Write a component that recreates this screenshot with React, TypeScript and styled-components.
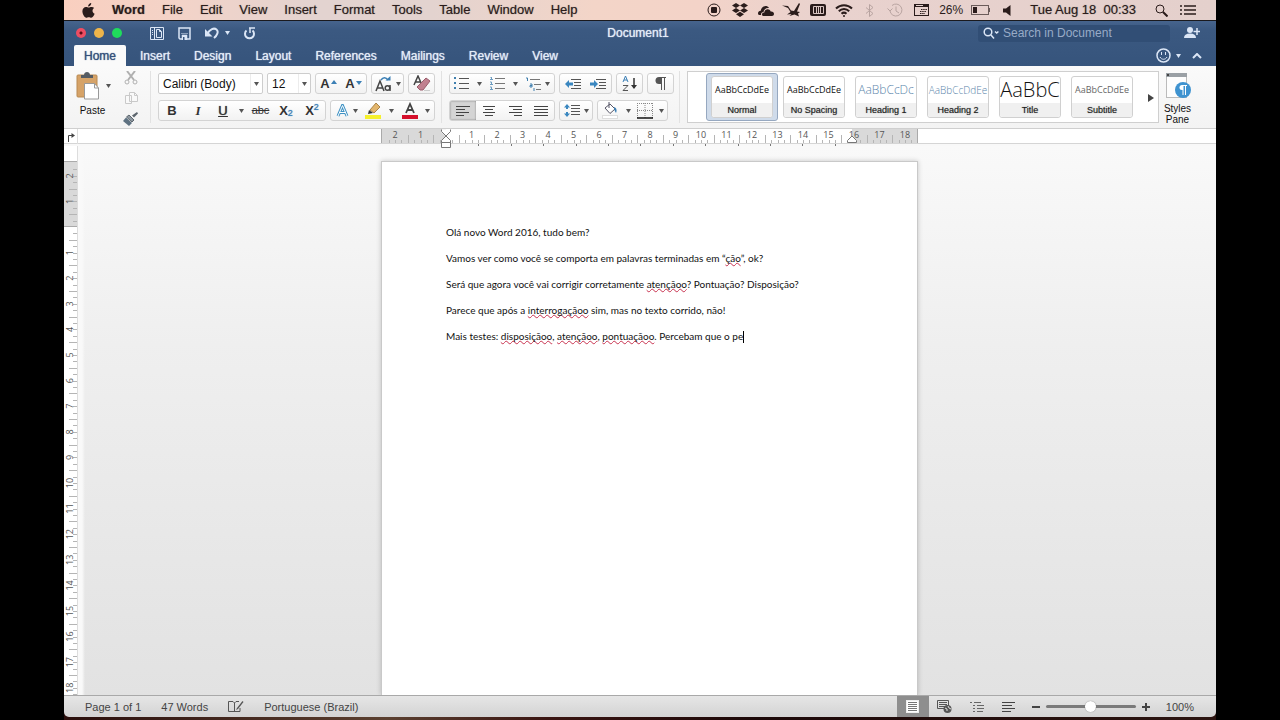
import React from 'react';
import styled, { createGlobalStyle, css } from 'styled-components';

const ui = '"Liberation Sans", Arial, sans-serif';

const GlobalStyle = createGlobalStyle`
  *, *::before, *::after { box-sizing: border-box; }
  body { margin: 0; background: #000; font-family: ${ui}; }
  button, input, select { font: inherit; color: inherit; margin: 0; padding: 0; border: 0; background: none; }
  svg { display: block; flex: none; }
  p { margin: 0; }
`;

const Screen = styled.div`
  height: 100vh;
  min-height: 360px;
  margin: 0 5%;
  display: flex;
  flex-direction: column;
  background: linear-gradient(90deg, #2a0e0c, #5b4030 28%, #3a1512 42%, #1c0808 60%, #2b1410);
  padding-bottom: 3px;
  overflow: hidden;
`;

/* ---------- system menu bar ---------- */

const MenuBar = styled.nav`
  flex: none;
  height: 21px;
  padding: 0 20px 0 18px;
  display: flex;
  align-items: center;
  justify-content: space-between;
  border-bottom: 1px solid #1a1a1e;
  background: linear-gradient(90deg, #f9cfbf, #f3d3c8 10%, #e3d3d0 22%, #e3d3cf 32%, #f3d5c8 46%, #f3d3c8 55%, #e9d2ce 66%, #e4d0cc);
  color: #2a1c1b;
  font-size: 13px;
  line-height: 20px;
`;

const MenuGroup = styled.div<{ $gap: number }>`
  display: flex;
  align-items: center;
  gap: ${(p) => p.$gap}px;
`;

const MenuItem = styled.button<{ $bold?: boolean }>`
  font-weight: ${(p) => (p.$bold ? 700 : 400)};
  white-space: pre;
  text-shadow: 0 0 1px rgba(42, 28, 27, 0.5);
`;

const Clock = styled(MenuItem)`
  padding: 0 8px 0 6px;
`;

const MenuIcon = styled.button<{ $faded?: boolean }>`
  width: 17px;
  display: flex;
  justify-content: center;
  opacity: ${(p) => (p.$faded ? 0.25 : 1)};
`;

const Percent = styled.span`
  font-size: 12px;
`;

/* ---------- window header ---------- */

const Window = styled.main`
  flex: 1;
  min-height: 0;
  display: flex;
  flex-direction: column;
  border-radius: 0 0 5px 5px;
  overflow: hidden;
`;

const Header = styled.header`
  flex: none;
  background: linear-gradient(#46648d, #3b5981 20%, #36547c);
  color: #e4ecf8;
  font-size: 12px;
`;

const TitleRow = styled.div`
  height: 24px;
  padding: 0 16px 0 12px;
  display: grid;
  grid-template-columns: 1fr auto 1fr;
  align-items: center;
`;

const Title = styled.h1`
  margin: 0;
  font-size: 12px;
  font-weight: 400;
  text-shadow: 0 0 1px currentColor;
`;

const TitleSide = styled.div<{ $end?: boolean }>`
  display: flex;
  align-items: center;
  justify-content: ${(p) => (p.$end ? 'flex-end' : 'flex-start')};
  gap: ${(p) => (p.$end ? 14 : 27)}px;
`;

const Lights = styled.div`
  display: flex;
  gap: 8px;
`;

const Light = styled.button<{ $color: string; $dot?: boolean }>`
  width: 10px;
  height: 10px;
  border-radius: 50%;
  background: ${(p) => (p.$dot ? `radial-gradient(circle, #5d0c18 1px, ${p.$color} 2px)` : p.$color)};
`;

const QuickTools = styled.div`
  display: flex;
  align-items: center;
  gap: 13px;
`;

const QuickButton = styled.button`
  display: flex;
  align-items: center;
  gap: 5px;
`;

const SearchBox = styled.label`
  width: 192px;
  height: 17px;
  padding-left: 5px;
  display: flex;
  align-items: center;
  gap: 4px;
  border-radius: 3px;
  background: #314e75;
`;

const SearchInput = styled.input`
  width: 160px;
  outline: none;
  &::placeholder { color: #98abc7; opacity: 1; }
`;

const TabRow = styled.div`
  height: 21px;
  padding: 0 14px 0 10px;
  display: flex;
  align-items: stretch;
  justify-content: space-between;
`;

const Tabs = styled.div`
  display: flex;
  gap: 4px;
`;

const Tab = styled.button<{ $active?: boolean }>`
  padding: 0 10px;
  font-size: 12px;
  border-radius: 2px 2px 0 0;
  text-shadow: 0 0 1px currentColor;
  ${(p) => p.$active && css`background: #fafafa; color: #35517c;`}
`;

const TabExtras = styled.div`
  display: flex;
  align-items: center;
  gap: 11px;
`;

/* ---------- ribbon ---------- */

const Ribbon = styled.section`
  flex: none;
  height: 63px;
  padding: 5px 0 0 10px;
  display: flex;
  align-items: flex-start;
  background: linear-gradient(#fafafa, #f3f3f3);
  border-bottom: 1px solid #cfcfcf;
  color: #222;
  font-size: 12px;
  overflow: hidden;
`;

const Divider = styled.div`
  flex: none;
  width: 1px;
  height: 52px;
  margin: 0 7px 0 6px;
  background: #e2e2e2;
`;

const Clipboard = styled.div`
  flex: none;
  width: 70px;
  padding-right: 6px;
  display: flex;
  justify-content: space-between;
`;

const BigButton = styled.button`
  display: flex;
  flex-direction: column;
  align-items: center;
  font-size: 10px;
  line-height: 11px;
  color: #111;
`;

const PasteFace = styled.span`
  display: flex;
  align-items: center;
  gap: 6px;
  padding-left: 2px;
  margin-bottom: 5px;
`;

const MiniTools = styled.div`
  display: flex;
  flex-direction: column;
  align-items: center;
  gap: 6px;
`;

const MiniButton = styled.button<{ $off?: boolean }>`
  opacity: ${(p) => (p.$off ? 0.4 : 1)};
`;

const ToolArea = styled.div<{ $width: number }>`
  flex: none;
  width: ${(p) => p.$width}px;
  padding-top: 2px;
  display: flex;
  flex-direction: column;
  gap: 6px;
`;

const ToolRow = styled.div`
  display: flex;
  gap: 4px;
`;

const Combo = styled.div<{ $width: number }>`
  flex: none;
  position: relative;
  width: ${(p) => p.$width}px;
  height: 21px;
  border: 1px solid #cdcdcd;
  border-radius: 2px;
  background: #fff;
`;

const ComboSelect = styled.select`
  appearance: none;
  width: 100%;
  height: 19px;
  padding-left: 4px;
  font-size: 12px;
  color: #111;
`;

const ComboArrow = styled.span`
  position: absolute;
  top: 0;
  right: 0;
  width: 12px;
  height: 19px;
  display: grid;
  place-items: center;
  border-left: 1px solid #ececec;
  pointer-events: none;
`;

const Group = styled.div`
  flex: none;
  display: flex;
  height: 21px;
  border: 1px solid #d3d3d3;
  border-radius: 3px;
  background: linear-gradient(#fff, #f2f2f2);
  overflow: hidden;
`;

const Tool = styled.button<{ $w: number; $on?: boolean; $joined?: boolean; $gap?: number }>`
  width: ${(p) => p.$w}px;
  display: flex;
  align-items: center;
  justify-content: center;
  gap: ${(p) => p.$gap ?? 4}px;
  color: #333;
  ${(p) => p.$on && css`background: #d4d4d4; box-shadow: inset 0 0 2px #777;`}
  & + & { border-left: ${(p) => (p.$joined ? 'none' : '1px solid #e6e6e6')}; }
`;

const Letter = styled.span<{ $look?: 'bold' | 'italic' | 'under' | 'strike' }>`
  font-size: ${(p) => (p.$look === 'strike' ? 11 : 13)}px;
  line-height: 15px;
  ${(p) => p.$look !== 'strike' && p.$look !== 'under' && css`font-weight: 700;`}
  ${(p) => p.$look === 'italic' && css`font-family: "Liberation Serif", serif; font-style: italic;`}
  ${(p) => p.$look === 'under' && css`text-decoration: underline; text-shadow: 0 0 1px currentColor;`}
  ${(p) => p.$look === 'strike' && css`text-decoration: line-through;`}
`;

const Script = styled.span<{ $up?: boolean }>`
  color: #3b7fb5;
  font-size: 9px;
  line-height: 9px;
  text-shadow: 0 0 1px currentColor;
  align-self: ${(p) => (p.$up ? 'flex-start' : 'flex-end')};
  margin: 2px 0;
`;

const Gallery = styled.div`
  flex: none;
  width: 472px;
  height: 52px;
  padding: 1px 4px 0 18px;
  display: flex;
  align-items: flex-start;
  justify-content: space-between;
  border: 1px solid #cfcfcf;
  background: #fff;
`;

const StyleList = styled.div`
  display: flex;
`;

const StyleFrame = styled.button<{ $on?: boolean }>`
  width: 72px;
  height: 48px;
  padding: 2px 4px;
  border: 1px solid ${(p) => (p.$on ? '#96a8c0' : 'transparent')};
  border-radius: 3px;
  background: ${(p) => (p.$on ? '#cfdbea' : 'none')};
`;

const StyleCard = styled.span`
  display: flex;
  flex-direction: column;
  height: 42px;
  border: 1px solid #d0d0d0;
  border-radius: 3px;
  background: #fff;
`;

const Sample = styled.span<{ $size: number; $color: string; $light?: boolean }>`
  flex: 1;
  display: flex;
  align-items: center;
  justify-content: center;
  font-family: "Open Sans", "Noto Sans", sans-serif;
  font-size: ${(p) => p.$size}px;
  font-weight: ${(p) => (p.$light ? 300 : 400)};
  line-height: 26px;
  color: ${(p) => p.$color};
  white-space: nowrap;
`;

const StyleName = styled.span`
  height: 14px;
  line-height: 14px;
  font-size: 9px;
  text-align: center;
  color: #222;
  background: #f0f0f0;
  border-radius: 0 0 3px 3px;
  white-space: nowrap;
  text-shadow: 0 0 1px rgba(0, 0, 0, 0.5);
`;

const GalleryNext = styled.button`
  align-self: center;
`;

const StylesPane = styled(BigButton)`
  flex: none;
  width: 37px;
  gap: 4px;
`;

/* ---------- rulers and document ---------- */

const TopRuler = styled.div`
  flex: none;
  position: relative;
  z-index: 1;
  height: 17px;
  display: flex;
  background: linear-gradient(#fff 14px, #d5d5d5 14px, #d5d5d5 15px, #f8f8f8 15px);
`;

const TabStop = styled.button`
  width: 14px;
  height: 15px;
  display: grid;
  place-items: center;
  border-right: 1px solid #ddd;
`;

const RulerTrack = styled.div`
  flex: 1;
  padding-left: 5px;
  display: flex;
  justify-content: center;
`;

const Workspace = styled.div`
  flex: 1;
  min-height: 0;
  display: flex;
  overflow: hidden;
`;

const SideRuler = styled.aside`
  flex: none;
  width: 14px;
  overflow: hidden;
  background: #fff;
  border-right: 1px solid #ddd;
`;

const Desk = styled.div`
  flex: 1;
  padding: 15px 0 0 5px;
  display: flex;
  justify-content: center;
  background: linear-gradient(90deg, #f9f9f9 4px, transparent 7px), linear-gradient(#f9f9f9, #efefef 36%, #e2e2e2);
`;

const Sheet = styled.article`
  width: 537px;
  padding: 57px 64px;
  background: #fff;
  border: 1px solid #c9c9c9;
  border-bottom: 0;
  box-shadow: 0 0 5px rgba(0, 0, 0, 0.2);
  color: #111;
  font-family: Lato, sans-serif;
  font-size: 10px;
  line-height: 26px;
  white-space: nowrap;
`;

const Typo = styled.span`
  text-decoration: underline wavy #c8324f 1px;
  text-underline-offset: 0;
  text-decoration-skip-ink: none;
`;

const Caret = styled.span`
  display: inline-block;
  width: 1px;
  height: 12px;
  vertical-align: middle;
  background: #000;
`;

/* ---------- status bar ---------- */

const StatusBar = styled.footer`
  flex: none;
  height: 22px;
  padding: 0 22px 0 21px;
  display: flex;
  align-items: stretch;
  justify-content: space-between;
  border-top: 1px solid #a9a9a9;
  background: linear-gradient(#e6e6e6, #d3d3d3);
  color: #444;
  font-size: 11px;
  line-height: 20px;
`;

const StatusGroup = styled.div<{ $gap: number }>`
  display: flex;
  align-items: center;
  gap: ${(p) => p.$gap}px;
`;

const ZoomGroup = styled(StatusGroup)`
  padding-left: 7px;
`;

const ZoomValue = styled.output`
  padding-left: 10px;
`;

const ViewButton = styled.button<{ $on?: boolean }>`
  width: 32px;
  height: 21px;
  display: grid;
  place-items: center;
  background: ${(p) => (p.$on ? '#8e8e8e' : 'none')};
`;

const ZoomSlider = styled.input`
  appearance: none;
  width: 90px;
  height: 3px;
  border-radius: 2px;
  background: #7a7a7a;
  &::-webkit-slider-thumb {
    appearance: none;
    width: 11px;
    height: 11px;
    border-radius: 50%;
    background: #fff;
    box-shadow: 0 0 1px #666;
  }
`;

/* ---------- drawings ---------- */

type IconProps = { w: number; h: number; children: React.ReactNode; stroke?: string; sw?: number };

const Icon = ({ w, h, children, stroke = 'none', sw = 1 }: IconProps) => (
  <svg width={w} height={h} viewBox={`0 0 ${w} ${h}`} fill="none" stroke={stroke} strokeWidth={sw} aria-hidden="true">
    {children}
  </svg>
);

const Down = ({ color = '#555' }: { color?: string }) => (
  <Icon w={5} h={4}><path d="M0 0h5L2.500 4z" fill={color} /></Icon>
);

const AlignIcon = ({ rows, anchor }: { rows: number[]; anchor: 'l' | 'c' | 'r' }) => (
  <Icon w={14} h={12}>
    {rows.map((len, i) => (
      <rect key={i} x={anchor === 'l' ? 0 : anchor === 'r' ? 14 - len : (14 - len) / 2} y={i * 3 + 1} width={len} height={1} fill="#444" />
    ))}
  </Icon>
);

const BulletIcon = () => (
  <Icon w={15} h={13}>
    {[1, 6, 11].map((y) => <g key={y}><rect x={0} y={y - 1} width={2} height={2} fill="#3f7fae" /><rect x={5} y={y} width={10} height={1} fill="#555" /></g>)}
  </Icon>
);

const NumberIcon = () => (
  <Icon w={15} h={13}>
    {[1, 6, 11].map((y) => <g key={y}><path d={`M0 ${y - 1}h1.500v2.500M0 ${y + 1.5}h3`} stroke="#6c9cc0" /><rect x={5} y={y} width={10} height={1} fill="#777" /></g>)}
  </Icon>
);

const MultiIcon = () => (
  <Icon w={15} h={14}>
    <path d="M0 1h1.500v3M4 7h2v3h-2v-1.500h2M8 11v3" stroke="#3f7fae" />
    <path d="M4 2.500h10M8 7.500h7M10 12.500h5" stroke="#777" />
  </Icon>
);

const IndentIcon = ({ right }: { right?: boolean }) => (
  <Icon w={16} h={12}>
    <path d="M6 1.500h10M9 4.500h7M9 7.500h7M6 10.500h10" stroke="#555" />
    <path d={right ? 'M8 6L4 2v2.500H0v3h4V10z' : 'M0 6l4-4v2.500h4v3H4V10z'} fill="#3a87c0" />
  </Icon>
);

const SpacingIcon = () => (
  <Icon w={16} h={13}>
    <path d="M7 1.500h9M7 4.500h9M7 7.500h9M7 10.500h9" stroke="#555" />
    <path d="M3 0l3 3.500H4V5H2V3.500H0zM3 13l3-3.500H4V8H2v1.500H0z" fill="#3a87c0" />
  </Icon>
);

const tickLevels = (from: number, to: number) => {
  const out: { at: number; half: boolean }[] = [];
  for (let q = from; q <= to; q += 1) {
    if (q !== 0) out.push({ at: q, half: Math.abs(q % 4) === 2 });
  }
  return out;
};

const CM = 25.5;

const HorizontalRuler = () => (
  <svg width="537" height="20" viewBox="0 0 537 20" aria-label="Horizontal ruler" overflow="visible">
    <rect x="0" y="0" width="65" height="14" fill="#d9d9d9" />
    <rect x="471" y="0" width="66" height="14" fill="#d9d9d9" />
    <path d="M.5 0v14M536.500 0v14" stroke="#aaa" />
    {tickLevels(-9, 73).map(({ at, half }) => (
      <rect key={at} x={Math.round(65 + (at * CM) / 4)} y={half ? 6 : 11} width={1} height={half ? 8 : 3} fill="#b5b5b5" />
    ))}
    {Array.from({ length: 12 }, (_, i) => (
      <rect key={i} x={Math.round(65 + (i + 1) * 32.4)} y={15} width={1} height={2} fill="#777" />
    ))}
    <g fontFamily="Open Sans, Noto Sans, sans-serif" fontSize="9" fill="#555" textAnchor="middle">
      {Array.from({ length: 21 }, (_, i) => i - 2).filter((n) => n !== 0).map((n) => (
        <text key={n} x={65 + n * CM} y="9">{Math.abs(n)}</text>
      ))}
    </g>
    <g fill="#fff" stroke="#777">
      <path d="M60.500 0.500h9v3l-4.500 4l-4.500-4z" stroke="none" />
      <path d="M60.500 0.500v2l4.500 4.500l4.500-4.500v-2M60.500 13.500v-2l4.500-4.500l4.500 4.500v2zM60.500 13.500h9v5h-9z" />
      <path d="M466.500 13.500v-2l4.500-4.500l4.500 4.500v2z" />
    </g>
  </svg>
);

const VerticalRuler = () => (
  <svg width="13" height="1400" viewBox="0 0 13 1400" aria-label="Vertical ruler">
    <rect x="0" y="15" width="13" height="66" fill="#d9d9d9" />
    <path d="M0 15.500h13M0 80.500h13" stroke="#aaa" />
    {tickLevels(-9, 200).map(({ at, half }) => (
      <rect key={at} x={half ? 5 : 9} y={Math.round(81 + (at * 25.6) / 4)} width={half ? 8 : 4} height={1} fill="#b5b5b5" />
    ))}
    <g fontFamily="Open Sans, Noto Sans, sans-serif" fontSize="9" fill="#555" textAnchor="middle">
      {Array.from({ length: 21 }, (_, i) => i - 2).filter((n) => n !== 0).map((n) => (
        <text key={n} transform={`translate(9 ${81 + n * 25.6}) rotate(-90)`}>{Math.abs(n)}</text>
      ))}
    </g>
  </svg>
);

const DARK = '#2a1c1b';
const PALE = '#dbe6f6';

const AppleLogo = () => (
  <svg width="13" height="15" viewBox="0 0 24 28" fill={DARK} aria-hidden="true">
    <path d="M17 0c.2 2-.6 3.600-1.600 4.800C14.300 6 12.800 6.800 11.300 6.700c-.2-1.800.6-3.500 1.600-4.600C14 .9 15.700.1 17 0zM22.500 9.300c-1.900 1.200-3 2.900-3 5.200 0 2.600 1.500 4.600 3.900 5.600-.9 2.900-3.500 7.400-6.200 7.400-1.700 0-2.500-1-4.700-1s-3 1-4.700 1C4.700 27.500.6 20.900.6 15.500c0-5 3.100-8.200 6.700-8.200 2 0 3.700 1.300 5.100 1.300 1.200 0 3.200-1.400 5.500-1.300 1.900.1 3.600.8 4.600 2z" />
  </svg>
);

const menuNames = ['File', 'Edit', 'View', 'Insert', 'Format', 'Tools', 'Table', 'Window', 'Help'];
const tabNames = ['Home', 'Insert', 'Design', 'Layout', 'References', 'Mailings', 'Review', 'View'];

const styleItems = [
  { name: 'Normal', text: 'AaBbCcDdEe', size: 9, color: '#111' },
  { name: 'No Spacing', text: 'AaBbCcDdEe', size: 9, color: '#111' },
  { name: 'Heading 1', text: 'AaBbCcDc', size: 12, color: '#5c86ab', light: true },
  { name: 'Heading 2', text: 'AaBbCcDdEe', size: 10, color: '#5c86ab', light: true },
  { name: 'Title', text: 'AaBbC', size: 20, color: '#111', light: true },
  { name: 'Subtitle', text: 'AaBbCcDdEe', size: 9, color: '#666' },
];

export default function App() {
  return (
    <>
      <GlobalStyle />
      <Screen>
        <MenuBar aria-label="System menu">
          <MenuGroup $gap={17}>
            <MenuItem aria-label="Apple"><AppleLogo /></MenuItem>
            <MenuItem $bold>Word</MenuItem>
            {menuNames.map((name) => <MenuItem key={name}>{name}</MenuItem>)}
          </MenuGroup>
          <MenuGroup $gap={9}>
            <MenuIcon aria-label="Recording">
              <Icon w={14} h={14}><circle cx="7" cy="7" r="6" stroke={DARK} /><rect x="4" y="4" width="6" height="6" rx="1" fill={DARK} /></Icon>
            </MenuIcon>
            <MenuIcon aria-label="Dropbox">
              <Icon w={16} h={14}><path d="M4 0l4 2.500L4 5 0 2.500zM12 0l4 2.500L12 5 8 2.500zM4 5l4 2.500L4 10 0 7.500zM12 5l4 2.500-4 2.500-4-2.500zM8 8.800l4 2.500L8 14l-4-2.700z" fill={DARK} /></Icon>
            </MenuIcon>
            <MenuIcon aria-label="Cloud drive">
              <Icon w={16} h={11}><path d="M0 8.500C0 6.500 1.500 5.500 2.800 5.700 3.200 1.500 8.500-1 11 3 8 2.500 5.800 4.500 5.500 7c-2 0-2.800 1.500-2.300 3H1.500C.5 10 0 9.300 0 8.500z" fill={DARK} /><path d="M4 9.500C4 8 5 7.300 6.300 7.500 6.600 4 11.500 3 12.700 6.500c2-.3 3.300.8 3.300 2.300S15 11 14 11H5.500C4.500 11 4 10.300 4 9.500z" fill={DARK} /></Icon>
            </MenuIcon>
            <MenuIcon aria-label="Bird">
              <Icon w={19} h={14}><path d="M0 2.500l6 .5 3 4.500 3 .5L17 0l1 1-3 7.500 3 .5-2 1.500 1 3-4.500-2-5 1.500 2-2-4.500.5 3.500-2.500L6 5z" fill={DARK} /></Icon>
            </MenuIcon>
            <MenuIcon aria-label="Memory">
              <Icon w={16} h={12}><rect x="0" y="0" width="16" height="12" rx="2" fill={DARK} /><path d="M3.500 2.500h10v7h-10zM6.500 3v6M8.500 3v6M10.500 3v6" stroke="#d9c5c2" /></Icon>
            </MenuIcon>
            <MenuIcon aria-label="Wi-Fi">
              <Icon w={18} h={13} stroke={DARK} sw={2}><path d="M1 4.500C5.500 0 12.500 0 17 4.500M3.800 7.300c3-3 7.400-3 10.400 0M6.500 9.800c1.500-1.400 3.500-1.400 5 0" /><circle cx="9" cy="12" r="1" fill={DARK} stroke="none" /></Icon>
            </MenuIcon>
            <MenuIcon $faded aria-label="Bluetooth">
              <Icon w={9} h={13} stroke={DARK} sw={1}><path d="M1 3.500l7 6L4.500 12.500V.5L8 3.500l-7 6" /></Icon>
            </MenuIcon>
            <MenuIcon $faded aria-label="Time Machine">
              <Icon w={17} h={14} stroke={DARK} sw={1}><path d="M3 8A6 6 0 1 0 5 2.500M3 8L.5 5.500M3 8l2.500-2.500M9 3.500V8l3 2" /></Icon>
            </MenuIcon>
            <MenuIcon aria-label="Calendar">
              <Icon w={15} h={12}><rect x=".5" y=".5" width="14" height="11" stroke={DARK} /><path d="M0 0h15v3H0z" fill={DARK} /><path d="M2 1.500h7" stroke="#e6d3cf" /><path d="M7 5.500h6M6 7.500h6M6 9.500h5" stroke={DARK} strokeDasharray="1.500 .7" /></Icon>
            </MenuIcon>
            <Percent>26%</Percent>
            <MenuIcon aria-label="Battery">
              <Icon w={20} h={10}><rect x=".5" y=".5" width="17" height="9" stroke="#6b5c5a" /><rect x="2" y="2" width="4" height="6" fill={DARK} /><rect x="18" y="3" width="1" height="4" fill="#6b5c5a" /></Icon>
            </MenuIcon>
            <MenuIcon aria-label="Volume">
              <Icon w={8} h={11}><path d="M0 3.500h3L7.500 0v11L3 7.500H0z" fill={DARK} /></Icon>
            </MenuIcon>
            <Clock>{'Tue Aug 18  00:33'}</Clock>
            <MenuIcon aria-label="Search">
              <Icon w={13} h={13} stroke={DARK} sw={1}><circle cx="5" cy="5" r="4" /><path d="M8 8l4.500 4.500" strokeWidth="2" /></Icon>
            </MenuIcon>
            <MenuIcon aria-label="Notifications">
              <Icon w={16} h={10}><path d="M4 1h12M4 5h12M4 9h12" stroke={DARK} strokeWidth="1.500" /><path d="M0 1h2M0 5h2M0 9h2" stroke={DARK} strokeWidth="1.500" /></Icon>
            </MenuIcon>
          </MenuGroup>
        </MenuBar>

        <Window>
          <Header>
            <TitleRow>
              <TitleSide>
                <Lights>
                  <Light $color="#ee4d62" $dot aria-label="Close" />
                  <Light $color="#efb54a" aria-label="Minimize" />
                  <Light $color="#1fdc5c" aria-label="Zoom" />
                </Lights>
                <QuickTools>
                  <QuickButton aria-label="Sidebar">
                    <Icon w={16} h={13} stroke={PALE}><path d="M1.500.5h13v12h-13zM5.500 1v11M3 3.500h1M3 5.500h1M3 7.500h1M7.500 2.500h3l2 2v6h-5zM10.500 2.500v2h2" /></Icon>
                  </QuickButton>
                  <QuickButton aria-label="Save">
                    <Icon w={13} h={13}><path d="M1 1h11v11H2L1 11z" stroke={PALE} strokeWidth="1.500" /><path d="M3 6.500h7M4 8h5v5H4z" fill={PALE} stroke={PALE} strokeWidth=".5" /><path d="M5 10h1.500v3H5z" fill="#3b5981" /></Icon>
                  </QuickButton>
                  <QuickButton aria-label="Undo">
                    <Icon w={16} h={12} stroke={PALE} sw={2}><path d="M3 7c3-5 7-6.500 9.500-4.500s.5 6-2.500 8.500" /><path d="M1 2v7.500h7.500z" fill={PALE} stroke="none" /></Icon>
                    <Down color={PALE} />
                  </QuickButton>
                  <QuickButton aria-label="Repeat">
                    <Icon w={13} h={13} stroke={PALE} sw={2}><path d="M3.500 3.500a4.500 4.500 0 1 0 6 0" /><path d="M6 1h6M7 1v5" strokeWidth="1.500" /></Icon>
                  </QuickButton>
                </QuickTools>
              </TitleSide>
              <Title>Document1</Title>
              <TitleSide $end>
                <SearchBox>
                  <Icon w={16} h={12} stroke={PALE} sw={1.5}><circle cx="5" cy="5" r="3.800" /><path d="M8 8l3 3.500M12 4.500l1.700 1.500 1.700-1.500" /></Icon>
                  <SearchInput type="text" placeholder="Search in Document" aria-label="Search in Document" />
                </SearchBox>
                <QuickButton aria-label="Share">
                  <Icon w={16} h={12}><circle cx="6" cy="3" r="3" fill={PALE} /><path d="M0 11c0-3 2-4.500 6-4.500s6 1.500 6 4.500z" fill={PALE} /><path d="M13 1v7M9.500 4.500h7" stroke={PALE} strokeWidth="1.500" /></Icon>
                </QuickButton>
              </TitleSide>
            </TitleRow>
            <TabRow>
              <Tabs role="tablist">
                {tabNames.map((name, i) => (
                  <Tab key={name} role="tab" aria-selected={i === 0} $active={i === 0}>{name}</Tab>
                ))}
              </Tabs>
              <TabExtras>
                <QuickButton aria-label="Feedback">
                  <Icon w={15} h={15} stroke={PALE}><circle cx="7.500" cy="7.500" r="6.500" strokeWidth="1.500" /><path d="M5.500 4v3M9.500 4v3M4 9c1.500 3 5.500 3 7 0" /></Icon>
                  <Down color={PALE} />
                </QuickButton>
                <QuickButton aria-label="Collapse ribbon">
                  <Icon w={10} h={6} stroke={PALE} sw={2}><path d="M1 5l4-4 4 4" /></Icon>
                </QuickButton>
              </TabExtras>
            </TabRow>
          </Header>

          <Ribbon>
            <Clipboard>
              <BigButton>
                <PasteFace>
                  <Icon w={24} h={29}>
                    <rect x="1" y="4" width="20" height="22" rx="1" fill="#d6a368" stroke="#b98a52" />
                    <path d="M5 7V4h3c0-4 6-4 6 0h3v3z" fill="#555c63" />
                    <path d="M8.500 12.500h10l4 4.500v11h-14z" fill="#fff" stroke="#999" />
                    <path d="M18.500 12.500V17h4" stroke="#999" />
                  </Icon>
                  <Down />
                </PasteFace>
                Paste
              </BigButton>
              <MiniTools>
                <MiniButton $off aria-label="Cut">
                  <Icon w={14} h={14} stroke="#444" sw={2}><path d="M3 0l7 9M11 0L4 9" /><circle cx="3" cy="11" r="2" strokeWidth="1" /><circle cx="11" cy="11" r="2" strokeWidth="1" /></Icon>
                </MiniButton>
                <MiniButton $off aria-label="Copy">
                  <Icon w={14} h={15} stroke="#888"><path d="M1.500 4.500h6v8h-6zM5.500 1.500h5l3 3v6h-8z" fill="#fff" /><path d="M10.500 1.500v3h3" /></Icon>
                </MiniButton>
                <MiniButton aria-label="Format painter">
                  <Icon w={15} h={14}><path d="M14 0l1 1.500-4 4-2-2z" fill="#5d666e" /><path d="M6 3l5 5-2 2-5.500-5z" fill="#8d979f" stroke="#5d666e" /><path d="M3 5.500L9 11l-3 3-6-5z" fill="#5e7181" /></Icon>
                </MiniButton>
              </MiniTools>
            </Clipboard>

            <Divider />

            <ToolArea $width={277}>
              <ToolRow>
                <Combo $width={105}>
                  <ComboSelect aria-label="Font"><option>Calibri (Body)</option></ComboSelect>
                  <ComboArrow><Down /></ComboArrow>
                </Combo>
                <Combo $width={44}>
                  <ComboSelect aria-label="Font size"><option>12</option></ComboSelect>
                  <ComboArrow><Down /></ComboArrow>
                </Combo>
                <Group>
                  <Tool $w={25} $gap={1} aria-label="Grow font"><Letter>A</Letter><Icon w={6} h={8}><path d="M0 4h6L3 0z" fill="#3b7fb5" /></Icon></Tool>
                  <Tool $w={25} $gap={1} aria-label="Shrink font"><Letter>A</Letter><Icon w={6} h={8}><path d="M0 1h6L3 5z" fill="#3b7fb5" /></Icon></Tool>
                </Group>
                <Group>
                  <Tool $w={31} aria-label="Change case">
                    <Icon w={17} h={16}>
                      <path d="M1 15l4-10 4 10M2.500 12h5" stroke="#444" strokeWidth="1.500" />
                      <circle cx="12.500" cy="12" r="2.300" stroke="#444" strokeWidth="1.500" /><path d="M15 9v6" stroke="#444" strokeWidth="1.500" />
                      <path d="M6 4c2-3 5-3 7 0" stroke="#3b7fb5" strokeWidth="1.500" /><path d="M10.500 4.500h5V0z" fill="#3b7fb5" />
                    </Icon>
                    <Down />
                  </Tool>
                </Group>
                <Group>
                  <Tool $w={25} aria-label="Clear formatting">
                    <Icon w={18} h={17}>
                      <path d="M1 10L5 1l4 9M2.500 7h5" stroke="#444" strokeWidth="1.500" />
                      <path d="M13 3l4 3-7 9H7l-3-3z" fill="#c0808f" stroke="#9b5d6c" /><path d="M11 15.500h6" stroke="#ccc" />
                    </Icon>
                  </Tool>
                </Group>
              </ToolRow>
              <ToolRow>
                <Group>
                  <Tool $w={26} aria-label="Bold"><Letter $look="bold">B</Letter></Tool>
                  <Tool $w={26} aria-label="Italic"><Letter $look="italic">I</Letter></Tool>
                  <Tool $w={24} aria-label="Underline"><Letter $look="under">U</Letter></Tool>
                  <Tool $w={13} $joined aria-label="Underline styles"><Down /></Tool>
                  <Tool $w={25} $joined aria-label="Strikethrough"><Letter $look="strike">abc</Letter></Tool>
                  <Tool $w={26} $gap={0} aria-label="Subscript"><Letter>X</Letter><Script>2</Script></Tool>
                  <Tool $w={26} $gap={0} aria-label="Superscript"><Letter>X</Letter><Script $up>2</Script></Tool>
                </Group>
                <Group>
                  <Tool $w={31} aria-label="Text effects">
                    <Icon w={13} h={13}><path d="M2 12L6.500 1.500 11 12M4 8.500h5" stroke="#3f92c4" strokeWidth="3" /><path d="M2 12L6.500 1.500 11 12M4 8.500h5" stroke="#fff" strokeWidth="1" /></Icon>
                    <Down />
                  </Tool>
                  <Tool $w={23} aria-label="Highlight">
                    <Icon w={17} h={18}><path d="M11 1l4 4-6 6-4-3z" fill="#e3b66d" stroke="#a98448" /><path d="M4 8l4 3-5 1z" fill="#333" /><rect x="0" y="13" width="16" height="4" fill="#f5f02c" /></Icon>
                  </Tool>
                  <Tool $w={13} $joined aria-label="Highlight colours"><Down /></Tool>
                  <Tool $w={23} aria-label="Font colour">
                    <Icon w={16} h={18}><path d="M4 11L8 2l4 9M5.500 8h5" stroke="#444" strokeWidth="1.800" /><rect x="0" y="13" width="16" height="4" fill="#d5102c" /></Icon>
                  </Tool>
                  <Tool $w={13} $joined aria-label="Font colours"><Down /></Tool>
                </Group>
              </ToolRow>
            </ToolArea>

            <Divider />

            <ToolArea $width={224}>
              <ToolRow>
                <Group>
                  <Tool $w={36} $gap={8} aria-label="Bullets"><BulletIcon /><Down /></Tool>
                  <Tool $w={36} $gap={8} aria-label="Numbering"><NumberIcon /><Down /></Tool>
                  <Tool $w={32} aria-label="Multilevel list"><MultiIcon /><Down /></Tool>
                </Group>
                <Group>
                  <Tool $w={25} aria-label="Decrease indent"><IndentIcon /></Tool>
                  <Tool $w={26} aria-label="Increase indent"><IndentIcon right /></Tool>
                </Group>
                <Group>
                  <Tool $w={25} aria-label="Sort">
                    <Icon w={16} h={17}><path d="M1 7L3.500 1 6 7M2 5h3" stroke="#3b7fb5" /><path d="M1 10.500h5L1 15.500h5" stroke="#555" /><path d="M12 3v10" stroke="#333" strokeWidth="1.500" /><path d="M9 10h6l-3 4z" fill="#333" /></Icon>
                  </Tool>
                </Group>
                <Group>
                  <Tool $w={25} aria-label="Show paragraph marks">
                    <Icon w={11} h={13}><path d="M6 0H4a3.500 3.500 0 0 0 0 7h2z" fill="#555" /><path d="M6.500 0v13M9.500 0v13M5 .5h6" stroke="#555" /></Icon>
                  </Tool>
                </Group>
              </ToolRow>
              <ToolRow>
                <Group>
                  <Tool $w={26} $on aria-label="Align left"><AlignIcon rows={[14, 9, 13, 8]} anchor="l" /></Tool>
                  <Tool $w={26} aria-label="Centre"><AlignIcon rows={[12, 8, 12, 8]} anchor="c" /></Tool>
                  <Tool $w={26} aria-label="Align right"><AlignIcon rows={[13, 9, 13, 8]} anchor="r" /></Tool>
                  <Tool $w={26} aria-label="Justify"><AlignIcon rows={[14, 14, 14, 14]} anchor="l" /></Tool>
                </Group>
                <Group>
                  <Tool $w={32} aria-label="Line spacing"><SpacingIcon /><Down /></Tool>
                </Group>
                <Group>
                  <Tool $w={24} aria-label="Shading">
                    <Icon w={16} h={17}><path d="M3 6l5-4 5 5-5 4.500z" fill="#fff" stroke="#556" /><path d="M7 6V0" stroke="#556" /><path d="M12 5c3 1 3 4 2 6-1-2-2-3-2-6z" fill="#3b7fb5" /><rect x=".5" y="13.500" width="15" height="3" fill="#fff" stroke="#ddd" /></Icon>
                  </Tool>
                  <Tool $w={13} $joined aria-label="Shading colours"><Down /></Tool>
                  <Tool $w={20} aria-label="Borders">
                    <Icon w={16} h={16}><path d="M.5 0v15M8 0v15M15.500 0v15M0 .5h16M0 7.500h16" stroke="#888" strokeDasharray="1 1" /><path d="M0 15h16" stroke="#111" strokeWidth="1.500" /></Icon>
                  </Tool>
                  <Tool $w={12} $joined aria-label="Border styles"><Down /></Tool>
                </Group>
              </ToolRow>
            </ToolArea>

            <Divider />

            <Gallery>
              <StyleList>
                {styleItems.map((s, i) => (
                  <StyleFrame key={s.name} $on={i === 0}>
                    <StyleCard>
                      <Sample $size={s.size} $color={s.color} $light={s.light}>{s.text}</Sample>
                      <StyleName>{s.name}</StyleName>
                    </StyleCard>
                  </StyleFrame>
                ))}
              </StyleList>
              <GalleryNext aria-label="More styles"><Icon w={6} h={8}><path d="M0 0v8l6-4z" fill="#444" /></Icon></GalleryNext>
            </Gallery>
            <StylesPane>
              <Icon w={26} h={28}>
                <rect x="1.500" y="2.500" width="20" height="24" fill="#fdfdfd" stroke="#bbb" />
                <path d="M1 2h21v4H1z" fill="#9aa0a5" /><path d="M2 3h2v2H2z" fill="#444" />
                <circle cx="18" cy="19" r="8" fill="#3f93d0" />
                <path d="M18 14h-1a2.500 2.500 0 0 0 0 5h1z" fill="#fff" /><path d="M18 14v10M20.500 14v10M17 14.500h5" stroke="#fff" />
              </Icon>
              <span>Styles<br />Pane</span>
            </StylesPane>
          </Ribbon>

          <TopRuler>
            <TabStop aria-label="Tab stop">
              <Icon w={8} h={10}><path d="M1.500 10V3.500H6" stroke="#444" /><path d="M4.500 1L8 3.500 4.500 6z" fill="#444" /></Icon>
            </TabStop>
            <RulerTrack><HorizontalRuler /></RulerTrack>
          </TopRuler>

          <Workspace>
            <SideRuler><VerticalRuler /></SideRuler>
            <Desk>
              <Sheet lang="pt-BR">
                <p>Olá novo Word 2016, tudo bem?</p>
                <p>Vamos ver como você se comporta em palavras terminadas em “<Typo>ção</Typo>”, ok?</p>
                <p>Será que agora você vai corrigir corretamente <Typo>atençãoo</Typo>? Pontuação? Disposição?</p>
                <p>Parece que após a <Typo>interrogaçãoo</Typo> sim, mas no texto corrido, não!</p>
                <p>Mais testes: <Typo>disposiçãoo</Typo>, <Typo>atençãoo</Typo>, <Typo>pontuaçãoo</Typo>. Percebam que o pe<Caret /></p>
              </Sheet>
            </Desk>
          </Workspace>

          <StatusBar>
            <StatusGroup $gap={20}>
              <span>Page 1 of 1</span>
              <span>47 Words</span>
              <Icon w={16} h={13} stroke="#555"><path d="M8 11.500H.5V1.500H5L6.500 3v8.500M6.500 3L8 1.500h3M8 11.500h4V8" /><path d="M14.500 1L9 8l-1 2 2-1 5.500-7z" fill="#555" stroke="none" /></Icon>
              <span>Portuguese (Brazil)</span>
            </StatusGroup>
            <StatusGroup $gap={0}>
              <ViewButton $on aria-label="Print layout">
                <Icon w={13} h={13}><rect x=".5" y=".5" width="12" height="12" fill="#fff" stroke="#eee" /><path d="M2 2.500h9M2 4.500h9M2 6.500h9M2 8.500h9M2 10.500h9" stroke="#777" /></Icon>
              </ViewButton>
              <ViewButton aria-label="Web layout">
                <Icon w={15} h={14}><path d="M.5.5h11v8H.5zM2 2.500h8M2 4.500h8M2 6.500h6" stroke="#555" /><circle cx="10.500" cy="9" r="4" fill="#555" /><path d="M8 8l2 1v2M11 6l1 2 2 1" stroke="#ddd" /></Icon>
              </ViewButton>
              <ViewButton aria-label="Outline">
                <Icon w={14} h={12}><path d="M0 1.500h2M4 1.500h7M3 4.500h2M7 4.500h7M3 7.500h2M7 7.500h7M3 10.500h2M7 10.500h6" stroke="#666" /></Icon>
              </ViewButton>
              <ViewButton aria-label="Draft">
                <AlignIcon rows={[13, 10, 13, 9]} anchor="l" />
              </ViewButton>
              <ZoomGroup $gap={6}>
                <button aria-label="Zoom out"><Icon w={8} h={8}><path d="M0 4h8" stroke="#444" strokeWidth="2" /></Icon></button>
                <ZoomSlider type="range" min={0} max={200} defaultValue={100} aria-label="Zoom" />
                <button aria-label="Zoom in"><Icon w={8} h={8}><path d="M0 4h8M4 0v8" stroke="#444" strokeWidth="2" /></Icon></button>
                <ZoomValue>100%</ZoomValue>
              </ZoomGroup>
            </StatusGroup>
          </StatusBar>
        </Window>
      </Screen>
    </>
  );
}
